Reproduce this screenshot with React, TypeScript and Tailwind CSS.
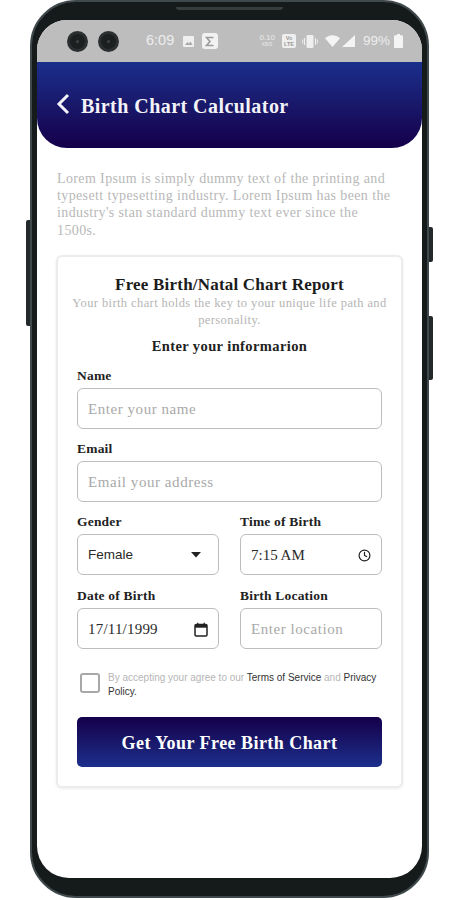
import React from 'react';
import { Clock } from 'lucide-react';

const serif = "font-['Liberation_Serif','DejaVu_Serif',serif]";
const sans = "font-['Liberation_Sans',Arial,sans-serif]";

const Field: React.FC<{ label: string; children: React.ReactNode }> = ({ label, children }) => (
  <div className="flex flex-col min-w-0">
    <label className={`${serif} text-[13.5px] leading-[17px] font-bold tracking-[0.2px] text-[#222] h-[17px] mb-[4px]`}>{label}</label>
    <div className="h-[41px] border-[1.5px] border-[#bdbdbd] rounded-[6px] bg-white flex items-center justify-between px-[10px] pt-[2px]">
      {children}
    </div>
  </div>
);

const Placeholder: React.FC<{ text: string }> = ({ text }) => (
  <span className={`${serif} text-[15px] tracking-[0.55px] text-[#a9a9a9]`}>{text}</span>
);

const StatusBar: React.FC = () => (
  <div className="h-[42px] bg-[#bdbdbd] flex items-center pl-[30px] pr-[19px] shrink-0">
    <span className="w-[21px] h-[21px] rounded-full bg-[#1c1f20] border-[3px] border-[#2b2f30] flex items-center justify-center">
      <span className="w-[3px] h-[3px] rounded-full bg-[#3d4244]" />
    </span>
    <span className="w-[21px] h-[21px] rounded-full bg-[#1c1f20] border-[3px] border-[#2b2f30] flex items-center justify-center ml-[10px]">
      <span className="w-[3px] h-[3px] rounded-full bg-[#3d4244]" />
    </span>
    <span className={`${sans} text-[14.5px] text-[#ededed] ml-[27px]`}>6:09</span>
    <svg className="ml-[8px]" width="13" height="13" viewBox="0 0 13 13">
      <rect x="1" y="1" width="11" height="11" rx="1" fill="#efefef" />
      <path d="M3 10 L5.5 7 L7 8.5 L8.5 6.5 L10.5 10 Z" fill="#a9a9a9" />
    </svg>
    <span className="ml-[7px] w-[16px] h-[16px] bg-[#f2f2f2] rounded-[3px] flex items-center justify-center">
      <svg width="10" height="11" viewBox="0 0 10 11">
        <path d="M8.5 1.5 H1.5 L5 5.5 L1.5 9.5 H8.5" fill="none" stroke="#9b9b9b" strokeWidth="1.6" />
      </svg>
    </span>
    <div className="ml-auto flex items-center">
      <span className={`${sans} flex flex-col items-center text-[#ececec] leading-none`}>
        <span className="text-[8px]">0.10</span>
        <span className="text-[4.5px] mt-[1px]">KB/S</span>
      </span>
      <span className={`${sans} ml-[7px] w-[14px] h-[14px] bg-[#efefef] rounded-[2px] flex flex-col items-center justify-center text-[5.5px] leading-[6px] font-bold text-[#999]`}>
        <span>Vo</span>
        <span>LTE</span>
      </span>
      <svg className="ml-[6px]" width="16" height="15" viewBox="0 0 16 15">
        <rect x="4.5" y="1" width="7" height="13" rx="1.3" fill="#efefef" />
        <path d="M2.5 4v7M0.7 5.5v4M13.5 4v7M15.3 5.5v4" stroke="#efefef" strokeWidth="1" />
      </svg>
      <svg className="ml-[7px]" width="15" height="12" viewBox="0 0 15 12">
        <path d="M0 3.2 C4 -0.8 11 -0.8 15 3.2 L7.5 12 Z" fill="#f4f4f4" />
      </svg>
      <svg className="ml-[2px]" width="13" height="12" viewBox="0 0 13 12">
        <path d="M13 0 V12 H0 Z" fill="#f4f4f4" />
      </svg>
      <span className={`${sans} text-[13.5px] text-[#ededed] ml-[8px]`}>99%</span>
      <svg className="ml-[4px]" width="9" height="14" viewBox="0 0 9 14">
        <path d="M3 0 H6 V1.3 H8 A1 1 0 0 1 9 2.3 V13 A1 1 0 0 1 8 14 H1 A1 1 0 0 1 0 13 V2.3 A1 1 0 0 1 1 1.3 H3 Z" fill="#f4f4f4" />
      </svg>
    </div>
  </div>
);

export default function App() {
  return (
    <div className="relative w-[460px] h-[900px] bg-white overflow-hidden">
      {/* side buttons */}
      <div className="absolute left-[26px] top-[220px] w-[5px] h-[106px] bg-[#23292b] rounded-l-[2px]" />
      <div className="absolute left-[428px] top-[227px] w-[5px] h-[35px] bg-[#23292b] rounded-r-[2px]" />
      <div className="absolute left-[428px] top-[316px] w-[5px] h-[64px] bg-[#23292b] rounded-r-[2px]" />

      {/* phone */}
      <div className="relative ml-[30px] w-[399px] h-[898px] rounded-[46px] bg-[#151a1b] border-[2px] border-[#3f484b] pt-[18px] px-[5px] pb-[18px]">
        <div className="absolute left-[144px] top-[5px] w-[107px] h-[3px] rounded-b-[3px] bg-[#363d3f]" />
        <div className="h-full rounded-t-[30px] rounded-b-[32px] bg-white overflow-hidden flex flex-col">
          <StatusBar />

          <header className="h-[86px] shrink-0 rounded-b-[30px] bg-gradient-to-b from-[#1a2f8c] to-[#14004a] flex items-center pl-[19px] text-white">
            <svg width="14" height="22" viewBox="0 0 14 22" className="mt-[-3px]">
              <path d="M12 2 L3 11 L12 20" fill="none" stroke="#f2f2f8" strokeWidth="3" />
            </svg>
            <h1 className={`${serif} text-[20px] font-bold tracking-[0.45px] ml-[11px] mt-[1px] text-[#f2f2f8]`}>Birth Chart Calculator</h1>
          </header>

          <p className={`${serif} mt-[22px] mx-[20px] text-[14px] leading-[17.2px] tracking-[0.38px] text-[#b8b8b8] whitespace-nowrap`}>
            Lorem Ipsum is simply dummy text of the printing and<br />
            typesett typesetting industry. Lorem Ipsum has been the<br />
            industry's stan standard dummy text ever since the<br />
            1500s.
          </p>

          <section className="mt-[16px] mx-[19px] h-[533px] border-[2px] border-[#ececec] rounded-[6px] shadow-[0_1px_3px_rgba(0,0,0,0.08)] bg-white px-[19px] pt-[18px]">
            <div className={`${serif} text-center`}>
              <h2 className="text-[17px] leading-[20px] font-bold tracking-[0.2px] text-[#1b1b1b]">Free Birth/Natal Chart Report</h2>
              <p className="-mx-[10px] text-[12.5px] leading-[17px] tracking-[0.4px] text-[#b5b5b5]">
                Your birth chart holds the key to your unique life path and<br />personality.
              </p>
              <h3 className="mt-[8px] text-[14.5px] leading-[18px] font-bold tracking-[0.4px] text-[#222]">Enter your informarion</h3>
            </div>

            <div className="mt-[12px] flex flex-col gap-[11px]">
              <Field label="Name"><Placeholder text="Enter your name" /></Field>
              <Field label="Email"><Placeholder text="Email your address" /></Field>
              <div className="grid grid-cols-2 gap-x-[21px] gap-y-[12px]">
                <Field label="Gender">
                  <span className={`${sans} text-[13.5px] text-[#2a2a2a]`}>Female</span>
                  <svg className="mr-[7px]" width="10" height="6" viewBox="0 0 10 6"><path d="M0 0 H10 L5 5.5 Z" fill="#222" /></svg>
                </Field>
                <Field label="Time of Birth">
                  <span className={`${serif} text-[15px] text-[#2a2a2a]`}>7:15 AM</span>
                  <Clock className="w-[13px] h-[13px] text-[#222]" strokeWidth={2.2} />
                </Field>
                <Field label="Date of Birth">
                  <span className={`${serif} text-[15px] tracking-[0.2px] text-[#2a2a2a]`}>17/11/1999</span>
                  <svg width="14" height="15" viewBox="0 0 14 15">
                    <rect x="1" y="2.5" width="12" height="11.5" rx="1.2" fill="none" stroke="#222" strokeWidth="1.5" />
                    <rect x="1" y="2.5" width="12" height="3.2" fill="#222" />
                    <path d="M3.8 0.8v2M10.2 0.8v2" stroke="#222" strokeWidth="1.3" />
                  </svg>
                </Field>
                <Field label="Birth Location"><Placeholder text="Enter location" /></Field>
              </div>
            </div>

            <div className="mt-[19px] flex items-start pl-[3px]">
              <span className="mt-[5px] w-[20px] h-[20px] border-[2px] border-[#a8a8a8] rounded-[3px] shrink-0" />
              <p className={`${sans} ml-[8px] mt-[3px] text-[10px] leading-[14.3px] text-[#b5b5b5]`}>
                By accepting your agree to our <span className="text-[#333]">Terms of Service</span> and <span className="text-[#333]">Privacy</span><br />
                <span className="text-[#333]">Policy.</span>
              </p>
            </div>

            <button className={`${serif} mt-[18px] w-full h-[50px] pt-[2px] rounded-[5px] bg-gradient-to-b from-[#14004a] to-[#1a2f8c] text-white text-[18px] font-bold tracking-[0.45px]`}>
              Get Your Free Birth Chart
            </button>
          </section>
        </div>
      </div>
    </div>
  );
}
